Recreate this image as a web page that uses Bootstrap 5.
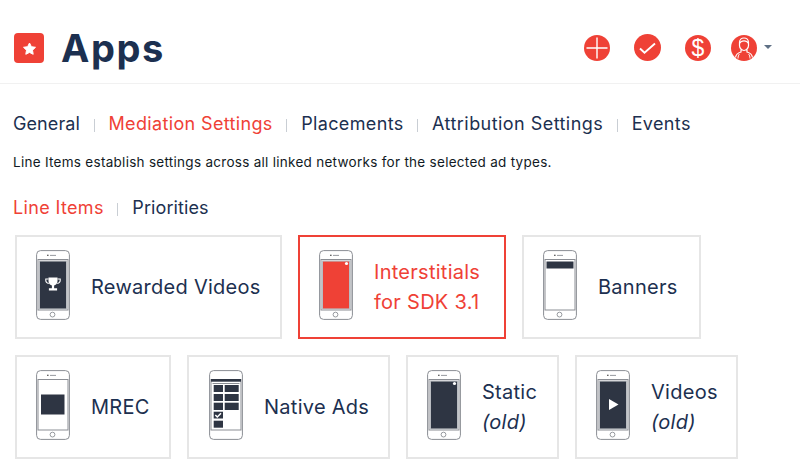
<!DOCTYPE html>
<html lang="en">
<head>
    <meta charset="UTF-8">
    <meta name="viewport" content="width=device-width, initial-scale=1.0">
    <title>Apps</title>
    <link href="https://cdn.jsdelivr.net/npm/bootstrap@5.3.0/dist/css/bootstrap.min.css" rel="stylesheet">
    <style>
        body {
            background-color: #fff;
            color: #1c3050;
            font-family: Inter, "Noto Sans", sans-serif;
            overflow: hidden;
        }
        .top-bar {
            height: 84px;
            padding: 12px 28px 0 14px;
            border-bottom: 1px solid #f1f1f1;
        }
        .page-title {
            font-size: 38px;
            font-weight: 700;
            margin: 0 0 0 17px;
            letter-spacing: 1.6px;
            line-height: 1;
        }
        .top-icons { gap: 24px; }
        .top-icons .user-icon { margin-left: -4px; }
        .top-icons .dropdown-toggle {
            color: #5f7085;
            font-size: 14px;
            line-height: 1;
            margin-left: -17px;
        }
        .tab-link {
            color: #1c3050;
            font-size: 18px;
            letter-spacing: .35px;
            text-decoration: none;
            line-height: 22px;
        }
        .tab-link.is-active { color: #ef4136; }
        .tab-link.tab-tight { letter-spacing: .1px; }
        .tab-link.tab-wide { letter-spacing: .45px; }
        .tab-sep {
            width: 1px;
            height: 13px;
            background-color: #c9ced4;
            margin: 2px 14px 0 13.5px;
        }
        .main-tabs { margin: 29px 0 0 13px; }
        .sub-tabs { margin: 26px 0 0 13px; }
        .intro {
            margin: 18px 0 0 13px;
            font-size: 13.5px;
            font-weight: 400;
            line-height: 18px;
            color: #111a24;
            letter-spacing: .28px;
        }
        .type-row { margin-left: 15px; gap: 16px; }
        .type-row.first { margin-top: 16px; }
        .type-row.second { margin-top: 16px; }
        .type-box {
            height: 104px;
            border: 2px solid #e6e6e6;
            border-radius: 0;
            padding-left: 19px;
            gap: 21px;
            font-size: 20px;
            letter-spacing: .27px;
            line-height: 30px;
            flex: none;
            flex-direction: row;
            align-items: center;
        }
        .type-box.is-active { border-color: #ef4136; color: #ef4136; }
        .type-box svg { flex: none; margin-bottom: 5px; }
        .w-rewarded { width: 267px; }
        .w-inter { width: 208px; }
        .w-banners { width: 179px; }
        .w-mrec { width: 156px; }
        .w-native { width: 203px; padding-left: 20px; }
        .w-static { width: 153px; }
        .w-videos { width: 163px; }
    </style>
</head>
<body>
    <svg width="0" height="0" class="position-absolute">
        <defs>
            <symbol id="chassis" viewBox="0 0 34 70">
                <rect x=".6" y=".6" width="32.8" height="68.8" rx="4" fill="#fff" stroke="#8b8e94" stroke-width="1"/>
                <rect x="2" y="9.500" width="30" height="50.500" fill="#fff" stroke="#8b8e94" stroke-width="1"/>
            </symbol>
            <symbol id="phone" viewBox="0 0 34 70">
                <use href="#chassis"/>
                <circle cx="16.500" cy="64.600" r="2.400" fill="#fff" stroke="#8b8e94" stroke-width=".9"/>
                <rect x="11" y="4.700" width="1.600" height="1.200" fill="#555"/>
                <rect x="14" y="4.900" width="6" height=".9" fill="#8b8e94"/>
            </symbol>
        </defs>
    </svg>

    <header class="top-bar d-flex align-items-center justify-content-between">
        <div class="d-flex align-items-center">
            <svg width="30" height="30" viewBox="0 0 30 30">
                <rect width="30" height="30" rx="4" fill="#ef4136"/>
                <path d="M15.500 10l1.900 3.700 4.100.6-3 2.900.7 4.100-3.700-1.900-3.700 1.900.7-4.100-3-2.900 4.100-.6z" fill="#fff" stroke="#fff" stroke-linejoin="round"/>
            </svg>
            <h1 class="page-title">Apps</h1>
        </div>
        <div class="top-icons d-flex align-items-center">
            <svg width="26" height="26" viewBox="0 0 26 26">
                <circle cx="13" cy="13" r="13" fill="#ef4136"/>
                <path d="M13 2.500v21M2.500 13h21" stroke="#fff" stroke-width="1.400"/>
            </svg>
            <svg width="27" height="27" viewBox="0 0 27 27">
                <circle cx="13.500" cy="13.500" r="13.500" fill="#ef4136"/>
                <path d="M6 14.500l4.500 4.300 10.500-9.300" fill="none" stroke="#fff" stroke-width="1.900"/>
            </svg>
            <svg width="26" height="26" viewBox="0 0 26 26">
                <circle cx="13" cy="13" r="13" fill="#ef4136"/>
                <text x="13" y="21" text-anchor="middle" font-family="Liberation Sans, sans-serif" font-size="23" fill="#fff">$</text>
            </svg>
            <svg class="user-icon" width="26" height="26" viewBox="0 0 26 26">
                <circle cx="13" cy="13" r="13" fill="#ef4136"/>
                <path d="M8.500 7.500C8.500 4.800 10.500 3 13 3s4.500 1.800 4.500 4.500v3c0 2.500-2.200 5-4.500 5s-4.500-2.500-4.500-5zM8.500 8.500c1-1.800 2.800-2.700 4.500-2.700s3.500.9 4.500 2.700M10 14.500v2.500c-3 .8-5 2-5.500 5.500M16 14.500v2.500c3 .8 5 2 5.500 5.500" fill="none" stroke="#fff" stroke-width="1.200"/>
                <path d="M7 23.500c0-2 .5-3.500 1.500-4.500M19 23.500c0-2-.5-3.500-1.500-4.500" fill="none" stroke="#fff" stroke-width="1"/>
            </svg>
            <span class="dropdown-toggle"></span>
        </div>
    </header>

    <nav class="main-tabs d-flex align-items-center">
        <a class="tab-link tab-tight" href="#">General</a><span class="tab-sep"></span>
        <a class="tab-link is-active" href="#">Mediation Settings</a><span class="tab-sep"></span>
        <a class="tab-link" href="#">Placements</a><span class="tab-sep"></span>
        <a class="tab-link tab-wide" href="#">Attribution Settings</a><span class="tab-sep"></span>
        <a class="tab-link" href="#">Events</a>
    </nav>

    <p class="intro">Line Items establish settings across all linked networks for the selected ad types.</p>

    <nav class="sub-tabs d-flex align-items-center">
        <a class="tab-link is-active" href="#">Line Items</a><span class="tab-sep"></span>
        <a class="tab-link tab-tight" href="#">Priorities</a>
    </nav>

    <div class="type-row first d-flex">
        <div class="card type-box w-rewarded">
            <svg width="34" height="70" viewBox="0 0 34 70">
                <use href="#phone"/>
                <rect x="3.400" y="11" width="27.200" height="48" fill="#2e3543" stroke="#b9bcc1" stroke-width="1.200"/>
                <path d="M12.500 27.500h9v3.500c0 2.600-2 4.300-3.400 4.600v2.600h3v2.300h-8.200v-2.300h3v-2.600c-1.400-.3-3.400-2-3.400-4.600z" fill="#fff"/>
                <path d="M12.500 29H9.800v1.500c0 1.500 1.200 2.700 3 3M21.500 29h2.700v1.500c0 1.500-1.200 2.700-3 3" fill="none" stroke="#fff" stroke-width="1.100"/>
            </svg>
            <span>Rewarded Videos</span>
        </div>
        <div class="card type-box w-inter is-active">
            <svg width="34" height="70" viewBox="0 0 34 70">
                <use href="#phone"/>
                <rect x="3.400" y="11" width="27.200" height="48" fill="#ef4136" stroke="#b9bcc1" stroke-width="1.200"/>
                <circle cx="27.500" cy="13.500" r="1.600" fill="#fff"/>
            </svg>
            <span>Interstitials<br>for SDK 3.1</span>
        </div>
        <div class="card type-box w-banners">
            <svg width="34" height="70" viewBox="0 0 34 70">
                <use href="#phone"/>
                <rect x="3.500" y="11.500" width="27" height="7" fill="#2e3543"/>
            </svg>
            <span>Banners</span>
        </div>
    </div>

    <div class="type-row second d-flex">
        <div class="card type-box w-mrec">
            <svg width="34" height="70" viewBox="0 0 34 70">
                <use href="#phone"/>
                <rect x="5" y="24.500" width="23.500" height="20" fill="#2e3543"/>
            </svg>
            <span>MREC</span>
        </div>
        <div class="card type-box w-native">
            <svg width="34" height="70" viewBox="0 0 34 70">
                <use href="#chassis"/>
                <rect x="2" y="9" width="30" height="2.700" fill="#2e3543"/>
                <rect x="3.500" y="13" width="27" height="1" fill="#8b8e94"/>
                <g fill="#2e3543">
                    <rect x="4.700" y="15" width="9.300" height="7"/>
                    <rect x="15.700" y="15" width="14" height="7"/>
                    <rect x="4.700" y="24" width="9.300" height="7"/>
                    <rect x="15.700" y="24" width="14" height="7"/>
                    <rect x="4.700" y="32.700" width="9.300" height="7.300"/>
                    <rect x="15.700" y="32.700" width="14" height="7.300"/>
                    <rect x="4.700" y="41.700" width="9.300" height="6.800"/>
                    <rect x="4.700" y="50.700" width="9.300" height="7"/>
                </g>
                <path d="M6.300 45l2 2 3.700-3.700" fill="none" stroke="#fff" stroke-width="1.500"/>
            </svg>
            <span>Native Ads</span>
        </div>
        <div class="card type-box w-static">
            <svg width="34" height="70" viewBox="0 0 34 70">
                <use href="#phone"/>
                <rect x="3.400" y="11" width="27.200" height="48" fill="#2e3543" stroke="#b9bcc1" stroke-width="1.200"/>
                <circle cx="27.500" cy="13.500" r="1.600" fill="#fff"/>
            </svg>
            <span>Static<br><em>(old)</em></span>
        </div>
        <div class="card type-box w-videos">
            <svg width="34" height="70" viewBox="0 0 34 70">
                <use href="#phone"/>
                <rect x="3.400" y="11" width="27.200" height="48" fill="#2e3543" stroke="#b9bcc1" stroke-width="1.200"/>
                <path d="M13 29l9.500 5.500L13 40z" fill="#fff"/>
            </svg>
            <span>Videos<br><em>(old)</em></span>
        </div>
    </div>

    <script src="https://cdn.jsdelivr.net/npm/bootstrap@5.3.0/dist/js/bootstrap.bundle.min.js"></script>
</body>
</html>
